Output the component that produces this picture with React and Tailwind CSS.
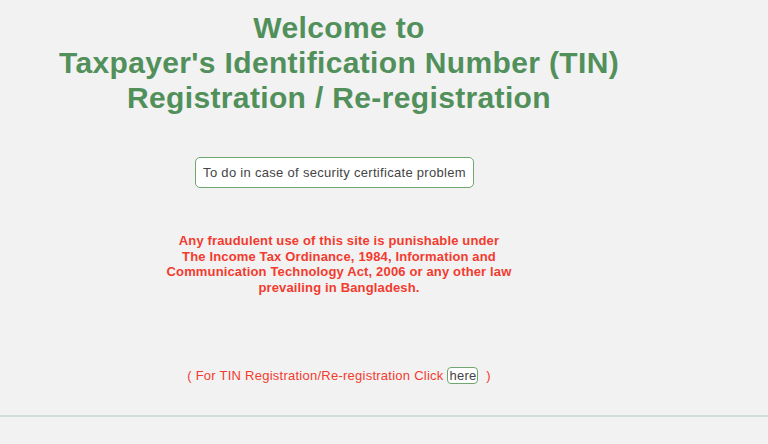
import React from "react";

export default function App() {
  return (
    <div className="min-h-screen w-full bg-[#f2f2f2] font-['Liberation_Sans',Arial,sans-serif]">
      <div className="flex w-[678px] flex-col items-center text-center">
        <h1 className="mt-[10px] text-[30px] font-bold leading-[35px] tracking-[0.35px] text-[#51905a]">
          Welcome to
          <br />
          Taxpayer's Identification Number (TIN)
          <br />
          Registration / Re-registration
        </h1>
        <div className="mt-[42px] mr-[9px] rounded-[5px] border border-[#6ea86e] bg-white px-[7px] py-[7px] text-[13px] leading-[15px] tracking-[0.3px] text-[#444]">
          To do in case of security certificate problem
        </div>
        <p className="mt-[45px] text-[13px] font-bold leading-[15.5px] tracking-[0.15px] text-[#f23b2f]">
          Any fraudulent use of this site is punishable under
          <br />
          The Income Tax Ordinance, 1984, Information and
          <br />
          Communication Technology Act, 2006 or any other law
          <br />
          prevailing in Bangladesh.
        </p>
        <p className="mt-[72px] flex items-center text-[13px] leading-[15px] tracking-[0.25px] text-[#f23b2f]">
          <span className="whitespace-pre">( For TIN Registration/Re-registration Click </span>
          <span className="rounded-[4px] border border-[#6ea86e] bg-white px-[1px] text-[#444]">here</span>
          <span className="whitespace-pre">{"  )"}</span>
        </p>
      </div>
      <div className="mt-[31px] h-[2px] w-full bg-[#d2ddd7]" />
    </div>
  );
}
